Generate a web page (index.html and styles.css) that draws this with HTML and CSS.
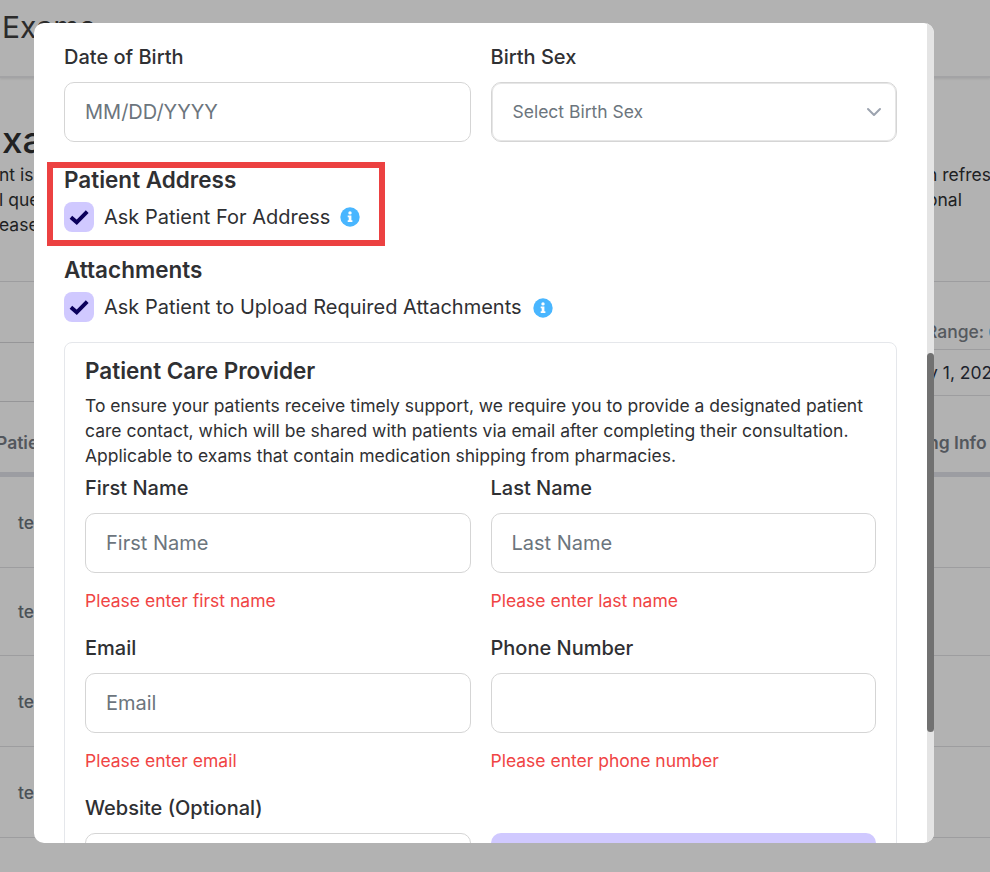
FILE: index.html
```html
<!DOCTYPE html>
<html lang="en">
<head>
<meta charset="UTF-8">
<meta name="viewport" content="width=device-width, initial-scale=1.0">
<title>Exams</title>
<link rel="stylesheet" href="styles.css">
</head>
<body>
<div class="page">
<header class="topbar">Exams</header>
<div class="columns">
<div class="side left">
<div class="intro">
<h1>xa</h1>
<p>nt is</p>
<p>l que</p>
<p>ease</p>
</div>
<div class="band"></div>
<div class="filter"></div>
<div class="th">Patie</div>
<div class="td first">te</div>
<div class="td">te</div>
<div class="td tall">te</div>
<div class="td tall">te</div>
</div>
<div class="side right">
<div class="intro">
<p>n refres</p>
<p>onal</p>
</div>
<div class="range">Range: <svg class="range-info" width="20" height="20" viewBox="0 0 20 20"><circle cx="10" cy="10" r="9.7" fill="#337fb2"/></svg></div>
<div class="date">y 1, 202</div>
<div class="th">ng Info</div>
<div class="td first"></div>
<div class="td"></div>
<div class="td tall"></div>
<div class="td tall"></div>
</div>
</div>
</div>
<div class="overlay">
<div class="modal">
<div class="modal-body">
<div class="row">
<div class="field">
<label for="dob">Date of Birth</label>
<input type="text" id="dob" placeholder="MM/DD/YYYY">
</div>
<div class="field">
<label>Birth Sex</label>
<div class="select"><span>Select Birth Sex</span>
<svg width="16" height="10" viewBox="0 0 16 10"><path d="M2 2l6 6 6-6" fill="none" stroke="#9ca3af" stroke-width="2" stroke-linecap="round" stroke-linejoin="round"/></svg>
</div>
</div>
</div>
<section class="option">
<h2>Patient Address</h2>
<div class="check-row">
<span class="checkbox"><svg width="20" height="16" viewBox="0 0 20 16"><path d="M1.9 8.2l5.8 5.1L18.2 2.6" fill="none" stroke="#0b005c" stroke-width="3.9"/></svg></span>
<span class="check-text">Ask Patient For Address</span>
<svg class="info" width="20" height="20" viewBox="0 0 20 20"><circle cx="10" cy="10" r="9.7" fill="#49b6ff"/><circle cx="10" cy="5.9" r="1.7" fill="#fff"/><path d="M7.7 8.5h3.7v4.7h1V15H7.7v-1.8h1v-2.9h-1z" fill="#fff"/></svg>
</div>
<div class="highlight"></div>
</section>
<section class="option">
<h2>Attachments</h2>
<div class="check-row">
<span class="checkbox"><svg width="20" height="16" viewBox="0 0 20 16"><path d="M1.9 8.2l5.8 5.1L18.2 2.6" fill="none" stroke="#0b005c" stroke-width="3.9"/></svg></span>
<span class="check-text">Ask Patient to Upload Required Attachments</span>
<svg class="info lower" width="20" height="20" viewBox="0 0 20 20"><circle cx="10" cy="10" r="9.7" fill="#49b6ff"/><circle cx="10" cy="5.9" r="1.7" fill="#fff"/><path d="M7.7 8.5h3.7v4.7h1V15H7.7v-1.8h1v-2.9h-1z" fill="#fff"/></svg>
</div>
</section>
<section class="card">
<h2>Patient Care Provider</h2>
<p>To ensure your patients receive timely support, we require you to provide a designated patient<br>care contact, which will be shared with patients via email after completing their consultation.<br>Applicable to exams that contain medication shipping from pharmacies.</p>
<div class="row">
<div class="field">
<label for="first">First Name</label>
<input type="text" id="first" placeholder="First Name">
<div class="error">Please enter first name</div>
</div>
<div class="field">
<label for="last">Last Name</label>
<input type="text" id="last" placeholder="Last Name">
<div class="error">Please enter last name</div>
</div>
</div>
<div class="row">
<div class="field">
<label for="email">Email</label>
<input type="text" id="email" placeholder="Email">
<div class="error">Please enter email</div>
</div>
<div class="field">
<label for="phone">Phone Number</label>
<input type="text" id="phone">
<div class="error">Please enter phone number</div>
</div>
</div>
<div class="row">
<div class="field">
<label for="website">Website (Optional)</label>
<input type="text" id="website">
</div>
<button type="button"></button>
</div>
</section>
</div>
<div class="scrollbar"><div class="thumb"></div></div>
</div>
</div>
</body>
</html>
```

FILE: styles.css
```css
* { box-sizing: border-box; }
body { margin: 0; height: 872px; overflow: hidden; font-family: Inter, "Liberation Sans", sans-serif; font-size: 20px; color: #2f3033; }
h1, h2, p { margin: 0; }

/* page behind the dialog */
.page { height: 872px; overflow: hidden; background-color: #b2b2b2; white-space: nowrap; }
.topbar { height: 78px; padding: 8px 0 0 2px; border-bottom: 2px solid #a3a3a5; box-shadow: 0 1px 2px rgba(0, 0, 0, 0.08); font-size: 30px; line-height: 38px; color: #2b2b2b; }
.columns { display: flex; justify-content: space-between; }
.side { overflow: hidden; }
.left { width: 60px; }
.right { width: 64px; }
.intro { height: 204px; padding-top: 40px; border-bottom: 1px solid #9d9d9f; font-size: 17.5px; line-height: 25px; color: #202122; }
.left p { margin-left: -1px; }
.right .intro { padding-top: 84px; }
.right .intro p { margin-left: 1px; }
.intro h1 { margin-left: 2px; font-size: 37px; line-height: 44px; font-weight: 500; }
.band { height: 61px; border-bottom: 1px solid #969698; }
.filter { height: 59px; border-bottom: 1px solid #969698; }
.range { display: flex; height: 68px; padding-top: 37px; border-bottom: 1px solid #9d9d9f; font-size: 17.5px; line-height: 25px; font-weight: 500; color: #55595e; }
.range-info { flex-shrink: 0; margin: 3px 0 0 5px; }
.date { height: 46px; padding: 10px 0 0 2px; border-bottom: 1px solid #9d9d9f; font-size: 17.5px; line-height: 25px; color: #1c222c; }
.th { height: 75px; padding-top: 28px; border-bottom: 5px solid #9c9da2; font-size: 17.5px; line-height: 25px; font-weight: 600; color: #53575d; }
.right .th { height: 81px; padding: 34px 0 0 2px; }
.left .th { margin-left: -4px; }
.td { height: 88px; padding: 31px 0 0 18px; border-bottom: 1px solid #9d9d9f; font-size: 17.5px; line-height: 25px; font-weight: 500; color: #4b5157; }
.first { height: 91px; padding-top: 33px; }
.tall { height: 91px; padding-top: 33px; }

/* dialog */
.overlay { position: absolute; top: 0; left: 0; width: 990px; height: 872px; padding: 23px 34px; }
.modal { display: flex; width: 900px; height: 820px; overflow: hidden; border-radius: 10px; background-color: white; }
.modal-body { flex: 1; height: 820px; overflow: hidden; padding: 19px 30px 0; }
.scrollbar { width: 7px; padding-top: 330px; background-color: #e4e4e4; }
.thumb { height: 379px; border-radius: 4px; background-color: #717171; }
.row { display: grid; grid-template-columns: 1fr 1fr; column-gap: 20px; }
label { display: block; height: 30px; margin-bottom: 10px; line-height: 30px; font-weight: 500; }
input, .select { display: block; width: 100%; height: 60px; padding: 0 20px; border: 1px solid #d5d5d5; border-radius: 10px; background-color: white; font-family: inherit; font-size: 20px; color: #2d2f33; }
input::placeholder { color: #6c757d; opacity: 1; }
.select { display: flex; align-items: center; justify-content: space-between; padding: 0 14px 0 21px; box-shadow: inset 0 0 0 1px #e6e6e6; font-size: 17.5px; color: #6c757d; }
.select span { padding-bottom: 1px; }
h2 { font-size: 22.5px; line-height: 30px; font-weight: 600; }
.option { position: relative; margin-top: 23px; }
.check-row { display: flex; align-items: center; height: 30px; margin-top: 7px; }
.checkbox { display: flex; align-items: center; justify-content: center; width: 30px; height: 30px; margin-right: 10px; border-radius: 8px; background-color: #d0c9ff; }
.info { margin-left: 10px; }
.lower { margin: 2px 0 0 11px; }
.highlight { position: absolute; top: -3px; left: -17px; width: 338px; height: 84px; border: 6px solid #ec4141; }
.card { margin-top: 20px; padding: 13px 20px 20px; border: 1px solid #e5e7eb; border-radius: 8px; }
.card p { margin: 7px 0 5px; font-size: 17.5px; line-height: 25px; white-space: nowrap; }
.error { height: 26px; margin: 15px 0 19px; font-size: 17.5px; line-height: 26px; color: #f04444; }
button { height: 60px; margin-top: 40px; border: none; border-radius: 10px; background-color: #d0c9ff; }
```
